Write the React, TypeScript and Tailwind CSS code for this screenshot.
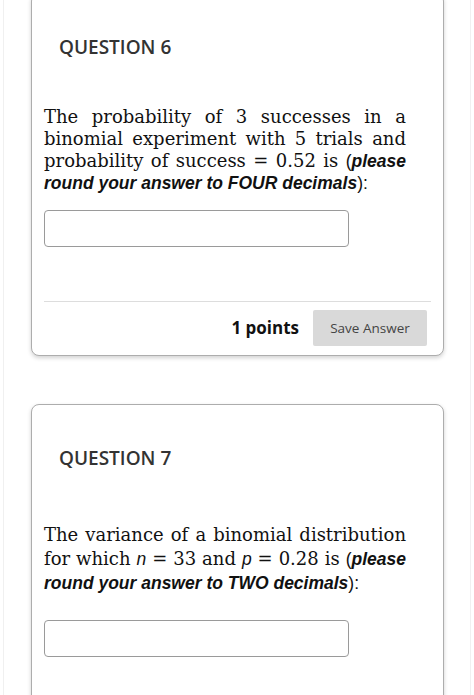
import React from 'react'

const serif = "font-['DejaVu_Serif',serif]"
const sans = "font-['Open_Sans',sans-serif]"

function Emph({ children }: { children: React.ReactNode }) {
  return <span className="font-['Liberation_Sans',Arial,sans-serif] text-[17.5px]">{children}</span>
}

function Footer() {
  return (
    <div className="mt-[54px] border-t border-[#dddddd] pt-[8px] pb-[9px] flex items-center justify-end gap-[14px] pr-[4px]">
      <span className={`${sans} text-[17px] font-bold text-[#111]`}>1 points</span>
      <button className={`${sans} h-[36px] w-[114px] rounded-[2px] bg-[#d9d9d9] text-[13.5px] text-[#444]`}>Save Answer</button>
    </div>
  )
}

function AnswerBox() {
  return <input type="text" className="block h-[37px] w-[305px] rounded-[4px] border border-[#9a9a9a] bg-white outline-none" />
}

export default function App() {
  return (
    <div className="min-h-screen bg-white overflow-hidden">
      <div className="mx-[3px] -mt-[7px] border-x border-[#f0f0f0] pl-[27px] pr-[26px] pb-[60px]">
        <div className="rounded-[8px] border border-[#adadad] bg-white pt-[40px] px-[12px] shadow-[0_2px_4px_rgba(0,0,0,0.18)]">
          <h2 className={`${sans} pl-[15px] text-[19px] leading-[26px] font-semibold text-[#333]`}>QUESTION 6</h2>
          <p className={`${serif} mt-[46px] max-w-[362px] text-justify text-[18px] leading-[22px] text-[#111]`}>
            The probability of 3 successes in a binomial experiment with 5 trials and probability of success = 0.52 is{' '}
            <Emph>(<b><i>please round your answer to FOUR decimals</i></b>):</Emph>
          </p>
          <div className="mt-[16px]">
            <AnswerBox />
          </div>
          <Footer />
        </div>

        <div className="mt-[48px] rounded-[8px] border border-[#adadad] bg-white pt-[40px] px-[12px] shadow-[0_2px_4px_rgba(0,0,0,0.18)]">
          <h2 className={`${sans} pl-[15px] text-[19px] leading-[26px] font-semibold text-[#333]`}>QUESTION 7</h2>
          <p className={`${serif} mt-[52px] max-w-[362px] text-justify text-[18px] leading-[24px] text-[#111]`}>
            The variance of a binomial distribution for which <Emph><i>n</i></Emph> = 33 and <Emph><i>p</i></Emph> = 0.28 is{' '}
            <Emph>(<b><i>please round your answer to TWO decimals</i></b>):</Emph>
          </p>
          <div className="mt-[25px]">
            <AnswerBox />
          </div>
          <Footer />
        </div>
      </div>
    </div>
  )
}
